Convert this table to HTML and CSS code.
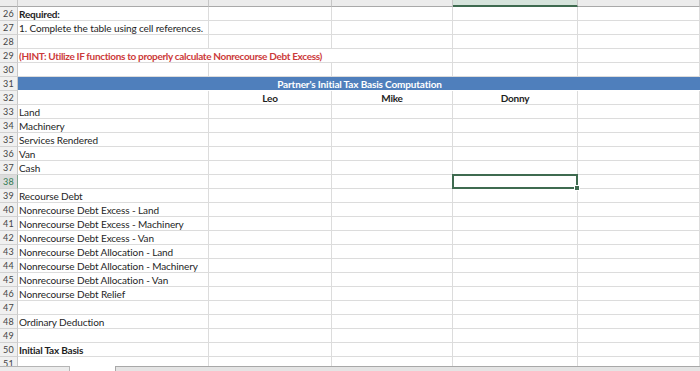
FILE: index.html
```html
<!DOCTYPE html>
<html>
<head>
<meta charset="utf-8">
<link rel="stylesheet" href="styles.css">
</head>
<body>
<div class="sheet">
  <div class="row colhead">
    <div class="c rh"></div><div class="c"></div><div class="c"></div><div class="c"></div><div class="c active"></div><div class="c"></div>
  </div>
  <div class="row"><div class="c rh">26</div><div class="c b">Required:</div><div class="c"></div><div class="c"></div><div class="c"></div><div class="c"></div></div>
  <div class="row"><div class="c rh">27</div><div class="c">1. Complete the table using cell references.</div><div class="c"></div><div class="c"></div><div class="c"></div><div class="c"></div></div>
  <div class="row"><div class="c rh">28</div><div class="c"></div><div class="c"></div><div class="c"></div><div class="c"></div><div class="c"></div></div>
  <div class="row"><div class="c rh">29</div><div class="c hint span3">(HINT: Utilize IF functions to properly calculate Nonrecourse Debt Excess)</div><div class="c"></div><div class="c"></div></div>
  <div class="row"><div class="c rh">30</div><div class="c"></div><div class="c"></div><div class="c"></div><div class="c"></div><div class="c"></div></div>
  <div class="row"><div class="c rh">31</div><div class="c title">Partner's Initial Tax Basis Computation</div></div>
  <div class="row"><div class="c rh">32</div><div class="c"></div><div class="c b ctr">Leo</div><div class="c b ctr">Mike</div><div class="c b ctr">Donny</div><div class="c"></div></div>
  <div class="row"><div class="c rh">33</div><div class="c">Land</div><div class="c"></div><div class="c"></div><div class="c"></div><div class="c"></div></div>
  <div class="row"><div class="c rh">34</div><div class="c">Machinery</div><div class="c"></div><div class="c"></div><div class="c"></div><div class="c"></div></div>
  <div class="row"><div class="c rh">35</div><div class="c">Services Rendered</div><div class="c"></div><div class="c"></div><div class="c"></div><div class="c"></div></div>
  <div class="row"><div class="c rh">36</div><div class="c">Van</div><div class="c"></div><div class="c"></div><div class="c"></div><div class="c"></div></div>
  <div class="row"><div class="c rh">37</div><div class="c">Cash</div><div class="c"></div><div class="c"></div><div class="c"></div><div class="c"></div></div>
  <div class="row"><div class="c rh rh-active">38</div><div class="c"></div><div class="c"></div><div class="c"></div><div class="c sel"></div><div class="c"></div></div>
  <div class="row"><div class="c rh">39</div><div class="c">Recourse Debt</div><div class="c"></div><div class="c"></div><div class="c"></div><div class="c"></div></div>
  <div class="row"><div class="c rh">40</div><div class="c">Nonrecourse Debt Excess - Land</div><div class="c"></div><div class="c"></div><div class="c"></div><div class="c"></div></div>
  <div class="row"><div class="c rh">41</div><div class="c">Nonrecourse Debt Excess - Machinery</div><div class="c"></div><div class="c"></div><div class="c"></div><div class="c"></div></div>
  <div class="row"><div class="c rh">42</div><div class="c">Nonrecourse Debt Excess - Van</div><div class="c"></div><div class="c"></div><div class="c"></div><div class="c"></div></div>
  <div class="row"><div class="c rh">43</div><div class="c">Nonrecourse Debt Allocation - Land</div><div class="c"></div><div class="c"></div><div class="c"></div><div class="c"></div></div>
  <div class="row"><div class="c rh">44</div><div class="c">Nonrecourse Debt Allocation - Machinery</div><div class="c"></div><div class="c"></div><div class="c"></div><div class="c"></div></div>
  <div class="row"><div class="c rh">45</div><div class="c">Nonrecourse Debt Allocation - Van</div><div class="c"></div><div class="c"></div><div class="c"></div><div class="c"></div></div>
  <div class="row"><div class="c rh">46</div><div class="c">Nonrecourse Debt Relief</div><div class="c"></div><div class="c"></div><div class="c"></div><div class="c"></div></div>
  <div class="row"><div class="c rh">47</div><div class="c"></div><div class="c"></div><div class="c"></div><div class="c"></div><div class="c"></div></div>
  <div class="row"><div class="c rh">48</div><div class="c">Ordinary Deduction</div><div class="c"></div><div class="c"></div><div class="c"></div><div class="c"></div></div>
  <div class="row"><div class="c rh">49</div><div class="c"></div><div class="c"></div><div class="c"></div><div class="c"></div><div class="c"></div></div>
  <div class="row"><div class="c rh">50</div><div class="c b">Initial Tax Basis</div><div class="c"></div><div class="c"></div><div class="c"></div><div class="c"></div></div>
  <div class="row"><div class="c rh">51</div><div class="c"></div><div class="c"></div><div class="c"></div><div class="c"></div><div class="c"></div></div>
</div>
<div class="tabs">
  <div class="tab-nav"></div>
  <div class="tab-active"></div>
  <div class="tab-scroll"></div>
</div>
</body>
</html>
```

FILE: styles.css
```css
html, body {
  margin: 0;
  padding: 0;
  background: #ffffff;
  width: 700px;
  height: 371px;
  overflow: hidden;
}
body {
  font-family: Lato, "Open Sans", sans-serif;
  font-size: 10px;
  color: #1e1e1e;
}
.sheet {
  height: 366px;
  overflow: hidden;
}
.row {
  display: grid;
  grid-template-columns: 18px 191px 123px 121px 125px 1fr;
  height: 14px;
}
.c {
  box-sizing: border-box;
  border-right: 1px solid #dcdcdc;
  border-bottom: 1px solid #dcdcdc;
  height: 14px;
  line-height: 14px;
  white-space: nowrap;
  overflow: visible;
  padding-left: 1px;
  letter-spacing: -0.1px;
  position: relative;
}
.rh {
  background: #f0f0f0;
  border-right: 1px solid #c8c8c8;
  border-bottom: 1px solid #d2d2d2;
  color: #444;
  font-size: 9px;
  line-height: 13px;
  letter-spacing: 0.2px;
  text-align: center;
  padding-left: 0;
}
.rh-active {
  background: #dcdcdc;
  color: #2f7a52;
  border-right: 1px solid #7fa58f;
}
.colhead {
  height: 7px;
}
.colhead .c {
  height: 7px;
  background: #ececec;
  border-right: 1px solid #c6c6c6;
  border-bottom: 1px solid #a9a9a9;
}
.colhead .active {
  background: #d6e4dc;
  border-bottom: 2px solid #3f6b50;
}
.b {
  font-weight: 700;
  letter-spacing: -0.2px;
}
.ctr {
  text-align: center;
  padding-left: 0;
}
.hint {
  color: #cc3a3a;
  font-weight: 700;
  letter-spacing: -0.33px;
}
.span3 {
  grid-column: span 3;
}
.title {
  grid-column: 2 / -1;
  background: #4f7fbc;
  color: #ffffff;
  font-weight: 700;
  letter-spacing: -0.15px;
  text-align: center;
  border-right: none;
  border-bottom: 1px solid #ffffff;
}
.sel::after {
  content: "";
  position: absolute;
  left: -1px;
  top: -1px;
  right: -1px;
  bottom: -1px;
  border: 2px solid #3f6b50;
}
.sel::before {
  content: "";
  position: absolute;
  right: -3px;
  bottom: -3px;
  width: 4px;
  height: 4px;
  background: #3f6b50;
  border: 1px solid #fff;
  z-index: 2;
}
.tabs {
  display: flex;
  height: 5px;
  background: #ffffff;
}
.tab-nav {
  width: 70px;
  box-sizing: border-box;
  background: #ececec;
  border-top: 1px solid #b5b5b5;
  border-right: 1px solid #b5b5b5;
}
.tab-active {
  width: 45px;
  background: #ffffff;
}
.tab-scroll {
  flex: 1;
  box-sizing: border-box;
  background: #e4e4e4;
  border-top: 1px solid #a8a8a8;
  border-left: 1px solid #a8a8a8;
}
```
